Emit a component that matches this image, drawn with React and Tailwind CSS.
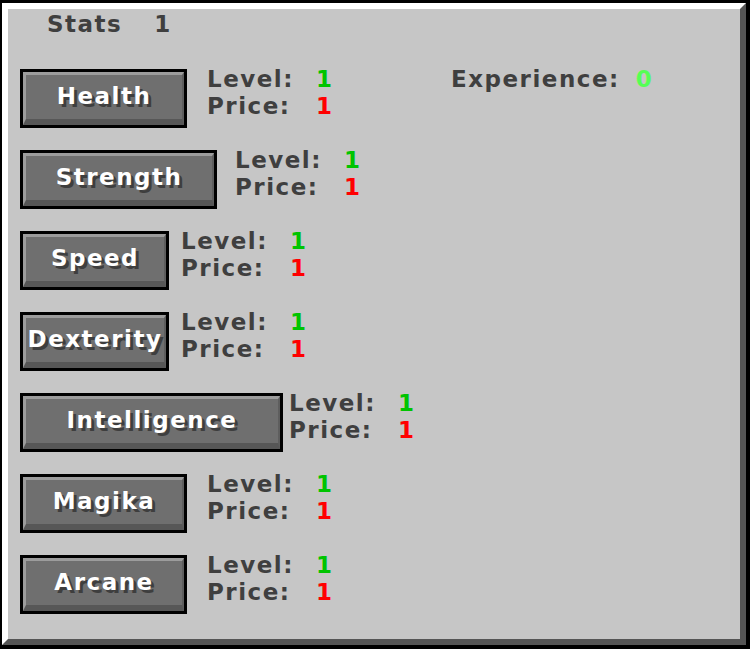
import React from "react";

const rows = [
  { name: "Health", w: 167, gap: 20, exp: true },
  { name: "Strength", w: 197, gap: 18 },
  { name: "Speed", w: 149, gap: 12 },
  { name: "Dexterity", w: 149, gap: 12 },
  { name: "Intelligence", w: 263, gap: 6 },
  { name: "Magika", w: 167, gap: 20 },
  { name: "Arcane", w: 167, gap: 20 },
];

function McButton({ label, width }) {
  return (
    <div
      className="h-[59px] shrink-0 border-[3px] border-black bg-[#6f6f6f]"
      style={{ width }}
    >
      <div className="flex h-full w-full items-center justify-center border-t-[3px] border-l-[3px] border-r-[2px] border-b-[6px] border-t-[#9c9c9c] border-l-[#9c9c9c] border-r-[#5e5e5e] border-b-[#575757] pb-[1px]">
        <span className="whitespace-nowrap text-[23px] font-bold leading-[27px] tracking-[1.5px] text-white [text-shadow:3px_3px_0_#3e3e3e]">
          {label}
        </span>
      </div>
    </div>
  );
}

export default function App() {
  return (
    <div className="h-[649px] w-[750px] bg-black pt-[3px] pl-[2px] pr-[4px] pb-[4px] font-['DejaVu_Sans',sans-serif]">
      <div className="h-full w-full border-[6px] border-t-white border-l-white border-r-[#555555] border-b-[#555555] bg-[#c6c6c6] pl-[12px] pt-[2px]">
        <div className="flex h-[27px] items-center pl-[27px] text-[23px] font-bold leading-[27px] tracking-[1.5px] text-[#3f3f3f]">
          <span>Stats</span>
          <span className="ml-[32px]">1</span>
        </div>
        <div className="mt-[31px] flex flex-col gap-[22px]">
          {rows.map((r) => (
            <div key={r.name} className="flex h-[59px] items-start">
              <McButton label={r.name} width={r.w} />
              <div
                className="-mt-[3px] grid grid-cols-[109px_auto] text-[23px] font-bold leading-[27px] tracking-[1.5px]"
                style={{ marginLeft: r.gap, width: r.exp ? 244 : undefined }}
              >
                <span className="text-[#3f3f3f]">Level:</span>
                <span className="text-[#00c400]">1</span>
                <span className="text-[#3f3f3f]">Price:</span>
                <span className="text-[#ff0000]">1</span>
              </div>
              {r.exp && (
                <div className="-mt-[3px] text-[23px] font-bold leading-[27px] tracking-[1.5px] text-[#3f3f3f]">
                  Experience:<span className="ml-[16px] text-[#55ff55]">0</span>
                </div>
              )}
            </div>
          ))}
        </div>
      </div>
    </div>
  );
}
